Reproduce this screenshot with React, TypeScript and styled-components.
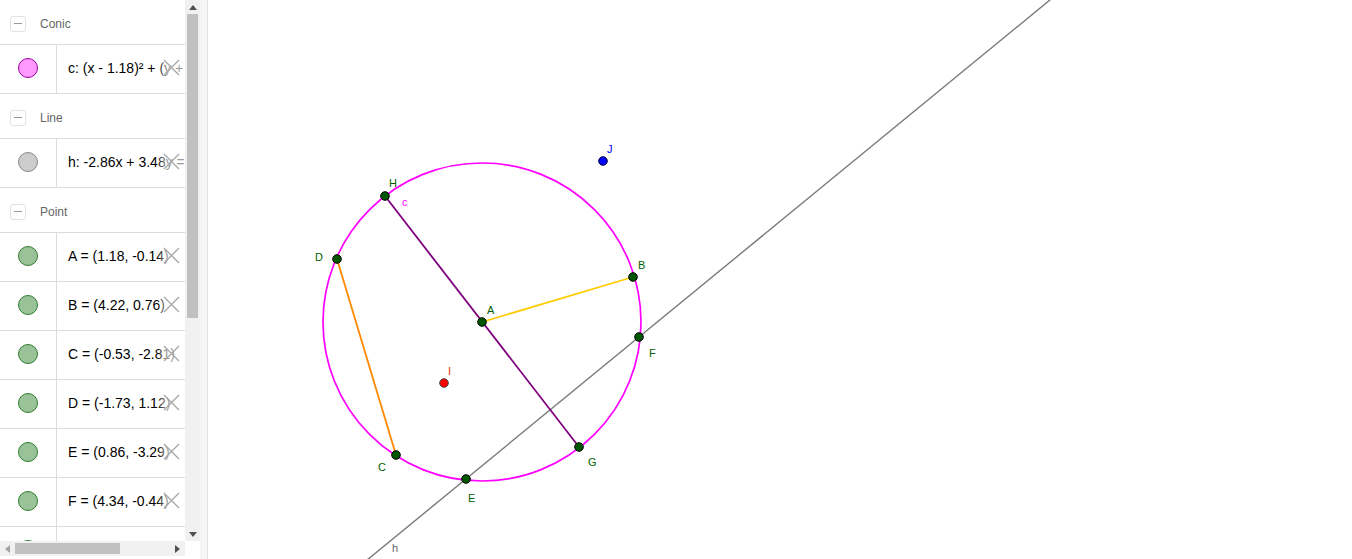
import React from 'react';
import styled, { createGlobalStyle } from 'styled-components';

const GlobalStyle = createGlobalStyle`
  html, body {
    margin: 0;
    padding: 0;
    background: #ffffff;
    font-family: 'Liberation Sans', Arial, sans-serif;
    overflow: hidden;
  }
`;

const Page = styled.div`
  display: flex;
  width: 1352px;
  height: 559px;
  background: #fff;
`;

const AlgebraPanel = styled.div`
  display: grid;
  grid-template-columns: 185px 15px;
  grid-template-rows: 541px 15px 3px;
  width: 200px;
  flex-shrink: 0;
`;

const List = styled.div`
  overflow: hidden;
  position: relative;
`;

const Header = styled.div`
  box-sizing: border-box;
  display: flex;
  align-items: center;
  height: 45px;
  padding-top: 3px;
  border-bottom: 1px solid #dcdcdc;
  padding-left: 10px;
  gap: 14px;
  color: #666;
  font-size: 12px;
`;

const Collapse = styled.span`
  box-sizing: border-box;
  width: 16px;
  height: 16px;
  border: 1px solid #e2e2e2;
  border-radius: 3px;
  display: flex;
  align-items: center;
  justify-content: center;
  &::after {
    content: '';
    width: 8px;
    height: 1px;
    background: #9a9a9a;
  }
`;

const Row = styled.div`
  box-sizing: border-box;
  display: flex;
  height: 49px;
  padding-bottom: 2px;
  border-bottom: 1px solid #dcdcdc;
  position: relative;
`;

const Marble = styled.div`
  width: 56px;
  flex-shrink: 0;
  border-right: 1px solid #dcdcdc;
  margin-bottom: -2px;
  padding-bottom: 2px;
  display: flex;
  align-items: center;
  justify-content: center;
`;

const Dot = styled.span<{ $fill: string; $stroke: string }>`
  box-sizing: border-box;
  width: 20px;
  height: 20px;
  border-radius: 50%;
  background: ${p => p.$fill};
  border: 1px solid ${p => p.$stroke};
`;

const Formula = styled.div`
  display: flex;
  align-items: center;
  padding-left: 11px;
  white-space: nowrap;
  font-size: 14px;
  color: #000;
`;

const Fade = styled.div`
  position: absolute;
  right: 0;
  top: 0;
  bottom: 0;
  width: 28px;
  background: linear-gradient(to right, rgba(255,255,255,0), rgba(255,255,255,0.6) 35%);
`;

const Close = styled.svg`
  position: absolute;
  right: 5px;
  top: 14px;
  width: 17px;
  height: 17px;
`;

const VTrack = styled.div`
  background: #f1f1f1;
  display: flex;
  flex-direction: column;
  align-items: center;
`;

const VThumb = styled.div`
  width: 11px;
  height: 304px;
  background: #c1c1c1;
`;

const ArrowBox = styled.div`
  height: 14px;
  width: 15px;
  display: flex;
  align-items: center;
  justify-content: center;
  flex-shrink: 0;
`;

const Spacer = styled.div`
  flex: 1;
`;

const HTrack = styled.div`
  background: #f1f1f1;
  display: flex;
  align-items: center;
`;

const HThumb = styled.div`
  width: 105px;
  height: 11px;
  background: #c1c1c1;
`;

const HArrow = styled.div`
  width: 15px;
  height: 15px;
  display: flex;
  align-items: center;
  justify-content: center;
`;

const Corner = styled.div`
  background: #fff;
`;

const Splitter = styled.div`
  width: 7px;
  flex-shrink: 0;
  background: #f6f6f6;
  border-right: 1px solid #e3e3e3;
`;

const Canvas = styled.svg`
  flex: 1;
  height: 559px;
  display: block;
`;

const Label = styled.text<{ $c: string }>`
  font-family: 'Liberation Sans', Arial, sans-serif;
  font-size: 11px;
  fill: ${p => p.$c};
`;

type Item = { text: string; fill: string; stroke: string };

const groups: { title: string; items: Item[] }[] = [
  {
    title: 'Conic',
    items: [{ text: 'c: (x - 1.18)² + (y + 0.14)² = 25.37', fill: '#ff99ff', stroke: '#990099' }],
  },
  {
    title: 'Line',
    items: [{ text: 'h: -2.86x + 3.48y = -13.88', fill: '#cccccc', stroke: '#888888' }],
  },
  {
    title: 'Point',
    items: [
      'A = (1.18, -0.14)',
      'B = (4.22, 0.76)',
      'C = (-0.53, -2.81)',
      'D = (-1.73, 1.12)',
      'E = (0.86, -3.29)',
      'F = (4.34, -0.44)',
      'G = (3.13, -2.58)',
    ].map(text => ({ text, fill: '#99c299', stroke: '#2f7f2f' })),
  },
];

const points = [
  { n: 'A', x: 482, y: 322, lx: 487, ly: 314 },
  { n: 'B', x: 633, y: 277, lx: 638, ly: 269 },
  { n: 'C', x: 396, y: 455, lx: 378, ly: 471 },
  { n: 'D', x: 337, y: 259, lx: 315, ly: 261 },
  { n: 'E', x: 466, y: 479, lx: 468, ly: 502 },
  { n: 'F', x: 639, y: 337, lx: 649, ly: 357 },
  { n: 'G', x: 579, y: 447, lx: 588, ly: 466 },
  { n: 'H', x: 385, y: 196, lx: 389, ly: 187 },
];

function XIcon() {
  return (
    <Close viewBox="0 0 17 17">
      <path d="M1 1 L16 16 M16 1 L1 16" stroke="#a8a8a8" strokeWidth="1.4" fill="none" />
    </Close>
  );
}

export default function App() {
  return (
    <Page>
      <GlobalStyle />
      <AlgebraPanel>
        <List>
          {groups.map(g => (
            <React.Fragment key={g.title}>
              <Header>
                <Collapse />
                {g.title}
              </Header>
              {g.items.map(it => (
                <Row key={it.text}>
                  <Marble>
                    <Dot $fill={it.fill} $stroke={it.stroke} />
                  </Marble>
                  <Formula>{it.text}</Formula>
                  <Fade />
                  <XIcon />
                </Row>
              ))}
            </React.Fragment>
          ))}
        </List>
        <VTrack>
          <ArrowBox>
            <svg width="8" height="5"><path d="M0 5 L4 0 L8 5 Z" fill="#505050" /></svg>
          </ArrowBox>
          <VThumb />
          <Spacer />
          <ArrowBox>
            <svg width="8" height="5"><path d="M0 0 L4 5 L8 0 Z" fill="#505050" /></svg>
          </ArrowBox>
        </VTrack>
        <HTrack>
          <HArrow>
            <svg width="5" height="8"><path d="M5 0 L0 4 L5 8 Z" fill="#a3a3a3" /></svg>
          </HArrow>
          <HThumb />
          <Spacer />
          <HArrow>
            <svg width="5" height="8"><path d="M0 0 L5 4 L0 8 Z" fill="#505050" /></svg>
          </HArrow>
        </HTrack>
        <Corner />
      </AlgebraPanel>
      <Splitter />
      <Canvas viewBox="208 0 1144 559">
        <line x1="361" y1="565" x2="1056" y2="-5" stroke="#7a7a7a" strokeWidth="1.4" />
        <circle cx="482" cy="322" r="159" fill="none" stroke="#ff00ff" strokeWidth="1.7" />
        <line x1="385" y1="196" x2="579" y2="447" stroke="#7f007f" strokeWidth="1.8" />
        <line x1="482" y1="322" x2="633" y2="277" stroke="#ffcc00" strokeWidth="1.8" />
        <line x1="337" y1="259" x2="396" y2="455" stroke="#ff8800" strokeWidth="1.8" />
        {points.map(p => (
          <g key={p.n}>
            <circle cx={p.x} cy={p.y} r="4.3" fill="#005500" stroke="#000" strokeWidth="1" />
            <Label $c="#005f00" x={p.lx} y={p.ly}>{p.n}</Label>
          </g>
        ))}
        <circle cx="444" cy="383" r="4.3" fill="#ff0000" stroke="#444" strokeWidth="1" />
        <Label $c="#e8340a" x="448" y="375">I</Label>
        <circle cx="603" cy="161" r="4.3" fill="#0000ff" stroke="#000033" strokeWidth="1" />
        <Label $c="#0000ff" x="607" y="153">J</Label>
        <Label $c="#ff00ff" x="402" y="206">c</Label>
        <Label $c="#666666" x="392" y="552">h</Label>
      </Canvas>
    </Page>
  );
}
